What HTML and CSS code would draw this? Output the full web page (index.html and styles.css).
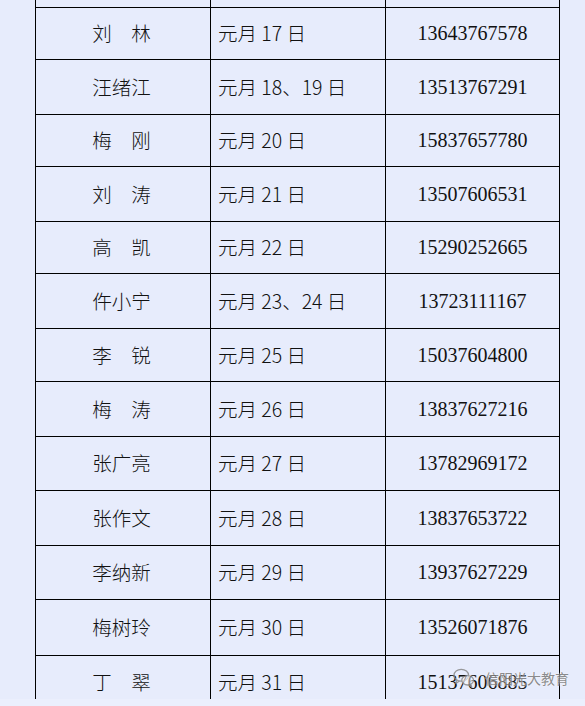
FILE: index.html
```html
<!DOCTYPE html>
<html lang="zh-CN">
<head>
<meta charset="utf-8">
<title>值班表</title>
<link rel="stylesheet" href="styles.css">
</head>
<body>
<div class="page">
  <table class="duty">
    <colgroup>
      <col class="c-name"><col class="c-date"><col class="c-tel">
    </colgroup>
    <tbody>
      <tr class="partial"><td></td><td></td><td></td></tr>
      <tr><td class="name">刘　林</td><td class="date">元月 17 日</td><td class="tel">13643767578</td></tr>
      <tr><td class="name">汪绪江</td><td class="date">元月 18、19 日</td><td class="tel">13513767291</td></tr>
      <tr><td class="name">梅　刚</td><td class="date">元月 20 日</td><td class="tel">15837657780</td></tr>
      <tr><td class="name">刘　涛</td><td class="date">元月 21 日</td><td class="tel">13507606531</td></tr>
      <tr><td class="name">高　凯</td><td class="date">元月 22 日</td><td class="tel">15290252665</td></tr>
      <tr><td class="name">仵小宁</td><td class="date">元月 23、24 日</td><td class="tel">13723111167</td></tr>
      <tr><td class="name">李　锐</td><td class="date">元月 25 日</td><td class="tel">15037604800</td></tr>
      <tr><td class="name">梅　涛</td><td class="date">元月 26 日</td><td class="tel">13837627216</td></tr>
      <tr><td class="name">张广亮</td><td class="date">元月 27 日</td><td class="tel">13782969172</td></tr>
      <tr><td class="name">张作文</td><td class="date">元月 28 日</td><td class="tel">13837653722</td></tr>
      <tr><td class="name">李纳新</td><td class="date">元月 29 日</td><td class="tel">13937627229</td></tr>
      <tr><td class="name">梅树玲</td><td class="date">元月 30 日</td><td class="tel">13526071876</td></tr>
      <tr><td class="name">丁　翠</td><td class="date">元月 31 日</td><td class="tel">15137606885</td></tr>
      <tr><td class="name">&nbsp;</td><td class="date">&nbsp;</td><td class="tel">&nbsp;</td></tr>
    </tbody>
  </table>
  <div class="watermark">
    <svg class="wm-icon" viewBox="0 0 24 22" width="22" height="20" aria-hidden="true">
      <ellipse cx="9" cy="8" rx="8" ry="6.5" fill="none" stroke="#8a8a8a" stroke-width="1.4"/>
      <path d="M4 13 L3 17 L7 14.2" fill="none" stroke="#8a8a8a" stroke-width="1.4" stroke-linejoin="round"/>
      <ellipse cx="16" cy="13.5" rx="6.5" ry="5.2" fill="rgba(255,255,255,0.6)" stroke="#8a8a8a" stroke-width="1.4"/>
      <path d="M19.5 18 L20.5 21 L17 18.6" fill="none" stroke="#8a8a8a" stroke-width="1.4" stroke-linejoin="round"/>
    </svg>
    <span class="wm-text">信阳光大教育</span>
  </div>
</div>
<div class="bottom-strip"></div>
</body>
</html>
```

FILE: styles.css
```css
html, body {
  margin: 0;
  padding: 0;
}
body {
  background: #e7ecfc;
  font-family: "Noto Sans CJK SC", "Liberation Serif", sans-serif;
  color: #111;
}
.page {
  position: relative;
  height: 699px;
  overflow: hidden;
}
.duty {
  border-collapse: collapse;
  margin-left: 35px;
  table-layout: fixed;
  width: 525px;
}
.c-name { width: 175px; }
.c-date { width: 175px; }
.c-tel  { width: 174px; }
.duty td {
  border: 1px solid #000;
  padding: 0;
  vertical-align: middle;
  font-size: 19.5px;
  line-height: 1;
  white-space: nowrap;
}
.duty tr { height: 54px; }
.duty tr.partial { height: 7px; }
.duty tr.partial td { border-top: none; }
.duty tr:nth-child(2),
.duty tr:nth-child(4),
.duty tr:nth-child(6) { height: 52px; }
.duty tr:nth-child(3),
.duty tr:nth-child(5),
.duty tr:nth-child(7) { height: 55px; }
.duty tr:nth-child(8) { height: 53px; }
.duty tr:nth-child(9) { height: 55px; }
.duty tr:nth-child(10) { height: 54px; }
.duty tr:nth-child(11) { height: 55px; }
.duty tr:nth-child(12) { height: 54px; }
.duty tr:nth-child(13) { height: 56px; }
.name {
  text-align: center;
  font-family: "Noto Sans CJK SC", sans-serif;
  font-weight: 300;
  padding-right: 3px !important;
}
.date {
  text-align: left;
  padding-left: 7px !important;
  font-family: "Noto Sans CJK SC", sans-serif;
  font-weight: 300;
}
.tel {
  text-align: center;
  font-family: "Liberation Serif", serif;
  font-size: 20px !important;
}
.watermark {
  position: absolute;
  left: 453px;
  top: 668px;
  display: flex;
  align-items: center;
  gap: 10px;
  opacity: 0.85;
}
.wm-icon { display: block; }
.wm-text {
  font-family: "Noto Sans CJK SC", sans-serif;
  font-size: 14px;
  color: #7a7a7a;
  text-shadow: 0 0 2px #fff, 0 0 1px #fff;
}
.bottom-strip {
  height: 7px;
  background: #ebeffd;
}
```
